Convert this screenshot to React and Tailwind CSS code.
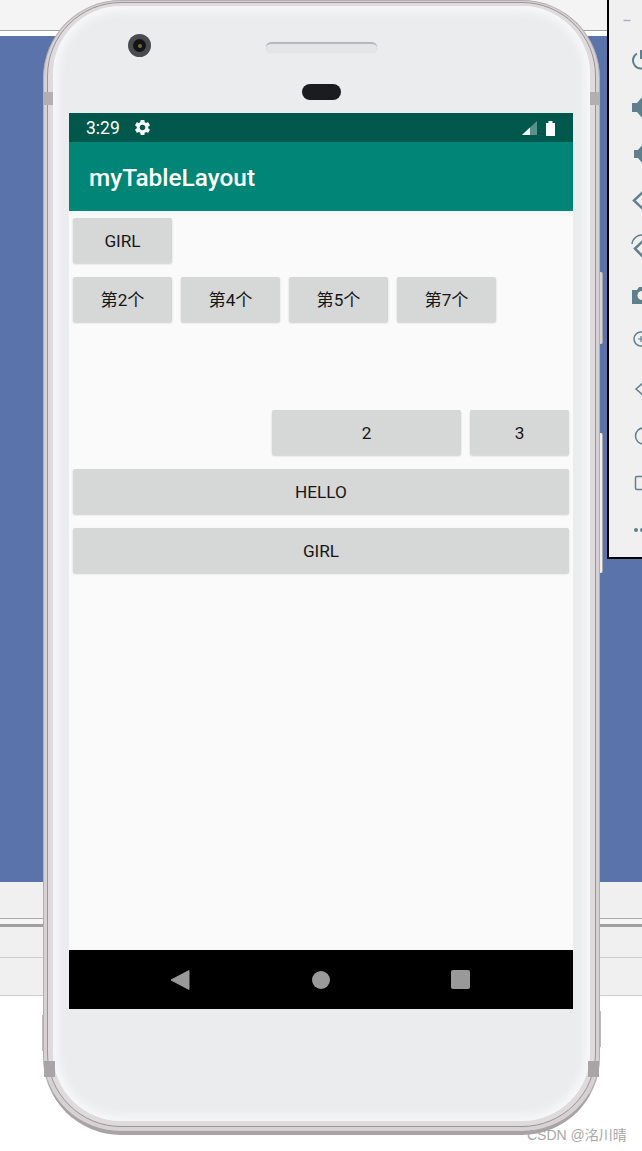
const FONT = { fontFamily: 'Roboto, "Noto Sans CJK SC", sans-serif' };

function Btn({ className, children }) {
  return (
    <div className={`h-[45px] flex items-center justify-center rounded-[2px] bg-[#d6d7d7] shadow-[0_1px_2px_rgba(0,0,0,0.18)] text-[17.200px] font-normal text-[#161616] pt-[2px] ${className}`}>
      {children}
    </div>
  );
}

function Gear() {
  return (
    <svg width="19" height="19" viewBox="0 0 24 24" fill="#fff">
      <path d="M19.14 12.94c.04-.3.06-.61.06-.94 0-.32-.02-.64-.07-.94l2.03-1.58c.18-.14.23-.41.12-.61l-1.92-3.32c-.12-.22-.37-.29-.59-.22l-2.39.96c-.5-.38-1.03-.7-1.62-.94l-.36-2.54c-.04-.24-.24-.41-.48-.41h-3.84c-.24 0-.43.17-.47.41l-.36 2.54c-.59.24-1.13.57-1.62.94l-2.39-.96c-.22-.08-.47 0-.59.22L2.74 8.87c-.12.21-.08.47.12.61l2.03 1.58c-.05.3-.09.63-.09.94s.02.64.07.94l-2.03 1.58c-.18.14-.23.41-.12.61l1.92 3.32c.12.22.37.29.59.22l2.39-.96c.5.38 1.03.7 1.62.94l.36 2.54c.05.24.24.41.48.41h3.84c.24 0 .44-.17.47-.41l.36-2.54c.59-.24 1.13-.56 1.62-.94l2.39.96c.22.08.47 0 .59-.22l1.92-3.32c.12-.22.07-.47-.12-.61l-2.01-1.58zM12 15.6c-1.98 0-3.6-1.62-3.6-3.6s1.62-3.6 3.6-3.6 3.6 1.62 3.6 3.6-1.62 3.6-3.6 3.6z" />
    </svg>
  );
}

function SidePanelIcons() {
  const c = '#5f7f8d';
  return (
    <svg width="34" height="556" viewBox="609 0 34 556" fill="none" stroke={c} strokeWidth="2">
      <path d="M623.500 20.500h7" stroke="#a3b6bd" strokeWidth="1.500" />
      <path d="M637 53.500a8 8 0 1 0 8 0" />
      <path d="M641 50v9" />
      <path d="M632 103h5l6-7v23l-6-7h-5z" fill={c} stroke="none" />
      <path d="M634 150h4l5-6v20l-5-6h-4z" fill={c} stroke="none" />
      <path d="M645 190l-11 10.500 11 10.500" strokeWidth="2.500" />
      <path d="M645 239l-10 9.500 10 10.500" strokeWidth="2.500" />
      <path d="M632 244a10 10 0 0 1 11-9" strokeWidth="1.500" />
      <path d="M632 290h5l2-3h6v17h-13z" fill={c} stroke="none" />
      <circle cx="642" cy="295.500" r="4.500" fill="#f0f0f0" stroke="none" />
      <circle cx="641" cy="339" r="7" strokeWidth="1.500" />
      <path d="M638 339h6M641 336v6" strokeWidth="1.200" />
      <path d="M644 382l-8 7 8 7" strokeWidth="1.500" />
      <circle cx="643.500" cy="436" r="8" strokeWidth="1.500" />
      <rect x="635.500" y="476.500" width="14" height="13" rx="1.500" strokeWidth="1.500" />
      <circle cx="636" cy="530" r="2" fill={c} stroke="none" />
      <circle cx="642" cy="530" r="2" fill={c} stroke="none" />
    </svg>
  );
}

export default function App() {
  return (
    <div className="relative w-[642px] h-[1151px] overflow-hidden bg-white" style={FONT}>
      {/* desktop behind the emulator */}
      <div className="flex flex-col">
        <div className="h-[30px] bg-[#f4f4f4] border-b border-[#a0a0a0] box-content" />
        <div className="h-[5px] bg-white" />
        <div className="h-[846px] bg-[#5a74ab]" />
        <div className="h-[36px] bg-[#f0f0f0] border-b border-[#aaaaaa] box-content" />
        <div className="h-[5px] bg-[#f6f6f6]" />
        <div className="h-[3px] bg-[#a0a0a0]" />
        <div className="h-[30px] bg-[#f0f0f0] border-b border-[#cccccc] box-content" />
        <div className="h-[37px] bg-[#f0f0f0] border-b border-[#cccccc] box-content" />
      </div>

      {/* emulator side toolbar */}
      <div className="absolute left-[607px] top-0 w-[40px] h-[559px] bg-[#f0f0f0] border-l-2 border-b-2 border-black">
        <SidePanelIcons />
      </div>

      {/* hardware side buttons */}
      <div className="absolute left-[599px] top-[272px] w-[4px] h-[72px] rounded-r-[2px] bg-[#d5d2d3] border-r border-[#a9a6a7]" />
      <div className="absolute left-[599px] top-[433px] w-[4px] h-[140px] rounded-r-[2px] bg-[#f0eeef] border-r border-[#a9a6a7]" />
      <div className="absolute left-[42px] top-[1015px] w-[3px] h-[36px] bg-[#bdb9bb]" />
      <div className="absolute left-[598px] top-[1011px] w-[3px] h-[36px] bg-[#bdb9bb]" />

      {/* phone */}
      <div className="absolute left-[43px] top-0 w-[557px] h-[1135px] rounded-[78px] bg-[#d6d1d3] border border-[#b4aeb1] border-b-[4px] border-b-[#a9a3a6] pt-[1px] pb-[4px] px-[3px]">
        <div className="h-full rounded-[74px] bg-[#dfdbdd] border border-[#9a9598] pt-[3px] pb-[5px] px-[5px]">
          <div className="relative h-full rounded-[68px] bg-[#ebecee] shadow-[inset_0_0_8px_5px_#f7f8f9] pt-[107px] pl-[16px] pr-[16px]">
            {/* speaker, camera, sensor */}
            <div className="absolute left-[213px] top-[36px] w-[111px] h-[11px] rounded-full bg-[#e4e5e7] border-t-2 border-[#b5b8bd] shadow-[0_0_1px_#c5c7ca]" />
            <div className="absolute left-[75px] top-[28px] w-[23px] h-[23px] rounded-full bg-[#4a4b4e] flex items-center justify-center">
              <div className="w-[13px] h-[13px] rounded-full bg-[#141416] flex items-center justify-center">
                <div className="w-[4px] h-[4px] rounded-full bg-[#6f6b3a]" />
              </div>
            </div>
            <div className="absolute left-[249px] top-[78px] w-[39px] h-[16px] rounded-full bg-[#1b1c20]" />

            {/* screen */}
            <div className="w-[504px] h-[896px] flex flex-col bg-[#fafafa]">
              <div className="h-[29px] shrink-0 bg-[#00574b] flex items-center pl-[17px] pr-[17px] text-white">
                <span className="text-[17.500px] leading-none pt-[2px]">3:29</span>
                <span className="ml-[13px] flex"><Gear /></span>
                <svg className="ml-auto" width="34" height="16" viewBox="0 0 34 16">
                  <path d="M0 15L15 1v14z" fill="#fff" fillOpacity="0.35" />
                  <path d="M0 15L8 7.500V15z" fill="#fff" />
                  <path d="M24 3h2.500V1h4v2H33v13h-9z" fill="#fff" />
                </svg>
              </div>
              <div className="h-[69px] shrink-0 bg-[#008577] flex items-center pl-[20px] text-white text-[24.400px] font-medium pt-[3px]">
                myTableLayout
              </div>
              <div className="flex-1 flex flex-col px-[4px] pt-[7px] bg-gradient-to-b from-[#f4f4f4] to-[#fafafa] bg-[length:100%_6px] bg-no-repeat">
                <div className="flex">
                  <Btn className="w-[99px]">GIRL</Btn>
                </div>
                <div className="flex gap-[9px] mt-[14px]">
                  <Btn className="w-[99px]">第2个</Btn>
                  <Btn className="w-[99px]">第4个</Btn>
                  <Btn className="w-[99px]">第5个</Btn>
                  <Btn className="w-[99px]">第7个</Btn>
                </div>
                <div className="flex justify-end gap-[9px] mt-[88px]">
                  <Btn className="w-[189px]">2</Btn>
                  <Btn className="w-[99px]">3</Btn>
                </div>
                <Btn className="w-full mt-[14px]">HELLO</Btn>
                <Btn className="w-full mt-[14px]">GIRL</Btn>
              </div>
              <div className="h-[59px] shrink-0 bg-black flex items-center pl-[102px] pr-[103px] justify-between">
                <svg width="19" height="20" viewBox="0 0 19 20"><path d="M0 10L18 0.500V19.500z" fill="#999" stroke="#999" strokeLinejoin="round" /></svg>
                <div className="w-[18px] h-[18px] rounded-full bg-[#999999]" />
                <div className="w-[19px] h-[19px] rounded-[2px] bg-[#999999]" />
              </div>
            </div>
          </div>
        </div>
      </div>

      {/* antenna bands */}
      <div className="absolute left-[44px] top-[92px] w-[9px] h-[13px] bg-[#b3aeb0]" />
      <div className="absolute left-[590px] top-[92px] w-[9px] h-[13px] bg-[#b3aeb0]" />
      <div className="absolute left-[44px] top-[1061px] w-[11px] h-[16px] bg-[#a9a5a7]" />
      <div className="absolute left-[588px] top-[1061px] w-[11px] h-[16px] bg-[#a9a5a7]" />

      {/* watermark */}
      <div className="absolute left-[527px] top-[1126px] text-[14px] leading-[18px] text-[#a8a8a8] whitespace-nowrap" style={{ fontFamily: '"Liberation Sans", "Noto Sans CJK SC", sans-serif' }}>
        CSDN @洺川晴
      </div>
    </div>
  );
}
